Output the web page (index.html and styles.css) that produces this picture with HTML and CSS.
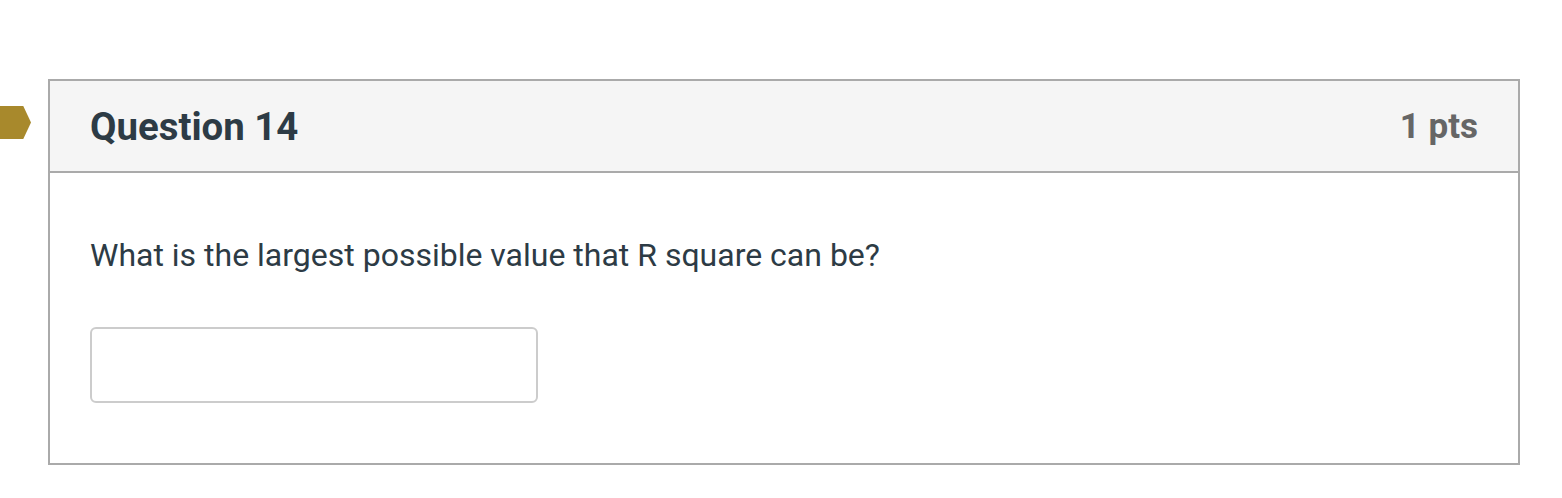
FILE: index.html
```html
<!DOCTYPE html>
<html>
<head>
<meta charset="utf-8">
<link rel="stylesheet" href="styles.css">
</head>
<body>
<div class="page">
  <div class="question">
    <div class="marker"></div>
    <div class="header">
      <span class="title">Question 14</span>
      <span class="pts">1 pts</span>
    </div>
    <div class="body">
      <p class="text">What is the largest possible value that R square can be?</p>
      <input class="answer" type="text">
    </div>
  </div>
</div>
</body>
</html>
```
FILE: styles.css
```css
html, body {
  margin: 0;
  padding: 0;
  background: #fff;
  font-family: Roboto, "Liberation Sans", sans-serif;
}
.page {
  padding: 79px 42px 0 48px;
}
.question {
  position: relative;
  border: 2px solid #aaaaaa;
}
.marker {
  position: absolute;
  left: -50px;
  top: 25px;
  width: 31px;
  height: 33px;
  background: #a8892c;
  clip-path: polygon(0 0, 75% 0, 100% 50%, 75% 100%, 0 100%);
}
.header {
  display: flex;
  justify-content: space-between;
  align-items: center;
  height: 90px;
  padding: 0 40px;
  background: #f5f5f5;
  border-bottom: 2px solid #aaaaaa;
}
.title {
  font-size: 38.4px;
  font-weight: 700;
  color: #2d3b45;
}
.pts {
  font-size: 35px;
  font-weight: 700;
  color: #666666;
}
.body {
  padding: 61px 40px 60px;
}
.text {
  margin: 0 0 51px;
  font-size: 32px;
  line-height: 42px;
  color: #2d3b45;
}
.answer {
  display: block;
  box-sizing: border-box;
  width: 448px;
  height: 76px;
  border: 2px solid #cccccc;
  border-radius: 6px;
  background: #fff;
  margin: 0;
  padding: 0 12px;
  font-size: 28px;
}
```
